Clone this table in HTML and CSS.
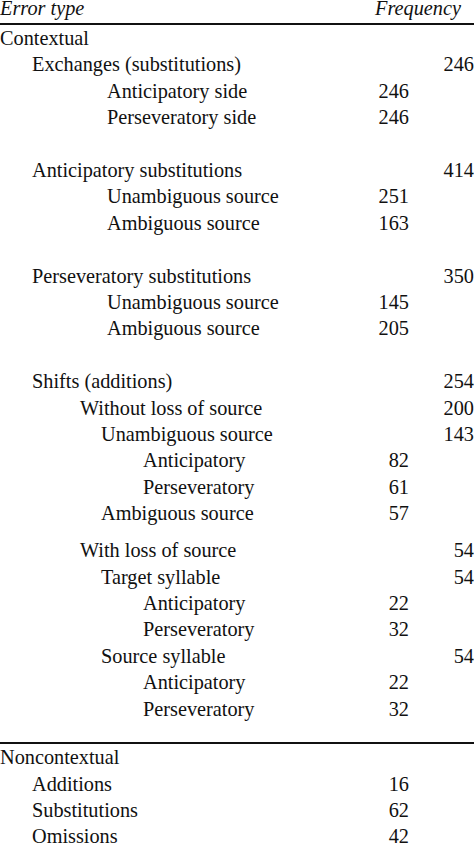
FILE: index.html
```html
<!DOCTYPE html>
<html>
<head>
<meta charset="utf-8">
<link rel="stylesheet" href="styles.css">
</head>
<body>
<table class="errors">
  <colgroup><col class="c-label"><col class="c-sub"><col class="c-total"></colgroup>
  <thead>
    <tr class="head"><th class="h-label">Error type</th><th class="h-freq" colspan="2">Frequency</th></tr>
  </thead>
  <tbody>
    <tr><td>Contextual</td><td></td><td></td></tr>
    <tr><td class="i1">Exchanges (substitutions)</td><td></td><td class="num">246</td></tr>
    <tr><td class="i2">Anticipatory side</td><td class="num">246</td><td></td></tr>
    <tr><td class="i2">Perseveratory side</td><td class="num">246</td><td></td></tr>
    <tr class="blank"><td colspan="3"></td></tr>
    <tr><td class="i1">Anticipatory substitutions</td><td></td><td class="num">414</td></tr>
    <tr><td class="i2">Unambiguous source</td><td class="num">251</td><td></td></tr>
    <tr><td class="i2">Ambiguous source</td><td class="num">163</td><td></td></tr>
    <tr class="blank"><td colspan="3"></td></tr>
    <tr><td class="i1">Perseveratory substitutions</td><td></td><td class="num">350</td></tr>
    <tr><td class="i2">Unambiguous source</td><td class="num">145</td><td></td></tr>
    <tr><td class="i2">Ambiguous source</td><td class="num">205</td><td></td></tr>
    <tr class="blank"><td colspan="3"></td></tr>
    <tr><td class="i1">Shifts (additions)</td><td></td><td class="num">254</td></tr>
    <tr><td class="s1">Without loss of source</td><td></td><td class="num">200</td></tr>
    <tr><td class="s2">Unambiguous source</td><td></td><td class="num">143</td></tr>
    <tr><td class="s3">Anticipatory</td><td class="num">82</td><td></td></tr>
    <tr><td class="s3">Perseveratory</td><td class="num">61</td><td></td></tr>
    <tr><td class="s2">Ambiguous source</td><td class="num">57</td><td></td></tr>
    <tr class="gap"><td colspan="3"></td></tr>
    <tr><td class="s1">With loss of source</td><td></td><td class="num">54</td></tr>
    <tr><td class="s2">Target syllable</td><td></td><td class="num">54</td></tr>
    <tr><td class="s3">Anticipatory</td><td class="num">22</td><td></td></tr>
    <tr><td class="s3">Perseveratory</td><td class="num">32</td><td></td></tr>
    <tr><td class="s2">Source syllable</td><td></td><td class="num">54</td></tr>
    <tr><td class="s3">Anticipatory</td><td class="num">22</td><td></td></tr>
    <tr><td class="s3">Perseveratory</td><td class="num">32</td><td></td></tr>
    <tr class="gap-end"><td colspan="3"></td></tr>
  </tbody>
  <tbody class="nonctx">
    <tr><td>Noncontextual</td><td></td><td></td></tr>
    <tr><td class="i1">Additions</td><td class="num">16</td><td></td></tr>
    <tr><td class="i1">Substitutions</td><td class="num">62</td><td></td></tr>
    <tr><td class="i1">Omissions</td><td class="num">42</td><td></td></tr>
  </tbody>
</table>
</body>
</html>
```

FILE: styles.css
```css
html, body {
  margin: 0;
  padding: 0;
  background: #ffffff;
  overflow: hidden;
}

.errors {
  width: 474px;
  table-layout: fixed;
  border-collapse: collapse;
  border-spacing: 0;
  font-family: "Liberation Serif", "Times New Roman", serif;
  font-size: 20.3px;
  color: #111111;
}

.c-label { width: 340px; }
.c-sub { width: 69px; }
.c-total { width: 65px; }

.errors th,
.errors td {
  padding: 0;
  white-space: nowrap;
  overflow: visible;
  line-height: 26.4px;
  height: 26.4px;
  vertical-align: top;
}

.errors .head th {
  font-style: italic;
  font-weight: normal;
  line-height: 17px;
  height: 23px;
  border-bottom: 2px solid #111111;
}

.errors .h-label { text-align: left; }
.errors .h-freq { text-align: right; padding-right: 13px; }

.errors .num { text-align: right; }

.errors .i1 { padding-left: 32px; }
.errors .i2 { padding-left: 107px; }
.errors .s1 { padding-left: 80px; }
.errors .s2 { padding-left: 101px; }
.errors .s3 { padding-left: 143px; }

.errors .gap td { height: 10.6px; line-height: 0; }
.errors .gap-end td { height: 20px; line-height: 0; border-bottom: 2px solid #111111; }
```
